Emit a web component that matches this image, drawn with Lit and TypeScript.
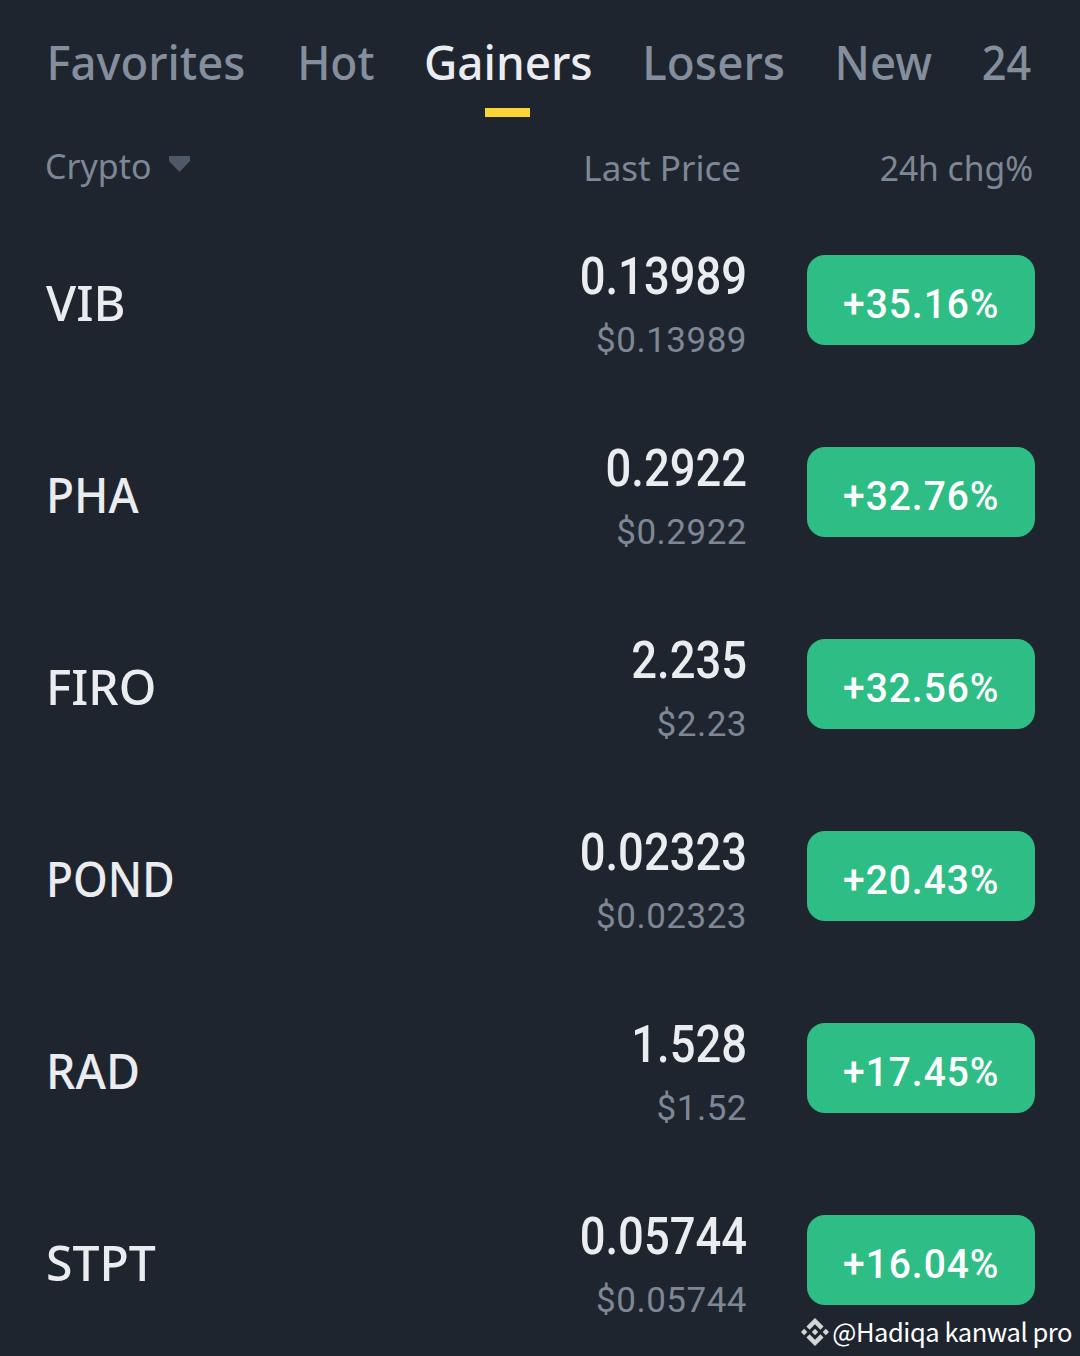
import { LitElement, html, css } from "lit";
import { customElement, property, state } from "lit/decorators.js";
import { styleMap } from "lit/directives/style-map.js";

interface Quote {
  symbol: string;
  stretch: number;
  price: string;
  fiat: string;
  change: string;
}

interface Tab {
  label: string;
  stretch: number;
}

const QUOTES: Quote[] = [
  { symbol: "VIB", stretch: 1, price: "0.13989", fiat: "$0.13989", change: "+35.16%" },
  { symbol: "PHA", stretch: 0.94, price: "0.2922", fiat: "$0.2922", change: "+32.76%" },
  { symbol: "FIRO", stretch: 0.98, price: "2.235", fiat: "$2.23", change: "+32.56%" },
  { symbol: "POND", stretch: 0.905, price: "0.02323", fiat: "$0.02323", change: "+20.43%" },
  { symbol: "RAD", stretch: 0.95, price: "1.528", fiat: "$1.52", change: "+17.45%" },
  { symbol: "STPT", stretch: 0.98, price: "0.05744", fiat: "$0.05744", change: "+16.04%" },
];

const TABS: Tab[] = [
  { label: "Favorites", stretch: 0.947 },
  { label: "Hot", stretch: 0.925 },
  { label: "Gainers", stretch: 0.955 },
  { label: "Losers", stretch: 0.955 },
  { label: "New", stretch: 0.95 },
  { label: "24", stretch: 0.9 },
];

@customElement("quote-row")
class QuoteRow extends LitElement {
  @property({ attribute: false }) quote!: Quote;

  static styles = css`
    :host {
      display: grid;
      grid-template-columns: 1fr 300px 288px;
      align-items: center;
      height: 192px;
      padding: 0 45px 0 46px;
      box-sizing: border-box;
    }
    .symbol {
      font-size: 49px;
      line-height: 60px;
      font-weight: 500;
      color: #eaecf0;
      padding-top: 3px;
      transform-origin: left;
    }
    .prices {
      display: flex;
      flex-direction: column;
      align-items: flex-end;
      font-family: Roboto, sans-serif;
      padding-top: 17px;
    }
    .price {
      font-size: 51px;
      line-height: 64px;
      font-weight: 500;
      color: #eaecf0;
      transform: scaleX(0.89);
      transform-origin: right;
    }
    .fiat {
      font-size: 35px;
      line-height: 64px;
      color: #7e8795;
      letter-spacing: 0.5px;
    }
    .badge {
      justify-self: end;
      display: flex;
      align-items: center;
      justify-content: center;
      width: 228px;
      height: 90px;
      border-radius: 18px;
      background: #2ebd85;
      padding: 8px 0 0 1px;
      box-sizing: border-box;
      font: 500 41px/50px Roboto, sans-serif;
      color: #fff;
    }
    .change {
      letter-spacing: 1px;
      transform: scaleX(0.95);
    }
  `;

  render() {
    const q = this.quote;
    return html`
      <div class="symbol" style=${styleMap({ transform: `scaleX(${q.stretch})` })}>${q.symbol}</div>
      <div class="prices">
        <div class="price">${q.price}</div>
        <div class="fiat">${q.fiat}</div>
      </div>
      <div class="badge"><span class="change">${q.change}</span></div>
    `;
  }
}

@customElement("app-root")
class AppRoot extends LitElement {
  @state() private active = "Gainers";

  static styles = css`
    :host {
      display: block;
      position: relative;
      width: 1080px;
      height: 1356px;
      overflow: hidden;
      background: #1f252f;
      font-family: "Noto Sans", sans-serif;
    }
    .tabs {
      display: grid;
      grid-template-columns: 253px 126px 219px 193px 147px auto;
      justify-content: start;
      justify-items: start;
      height: 120px;
      padding: 28px 0 0 40.5px;
      box-sizing: border-box;
    }
    .tab {
      display: flex;
      flex-direction: column;
      align-items: center;
      gap: 12px;
      font-size: 48px;
      line-height: 68px;
      font-weight: 500;
      color: #848e9c;
    }
    .tab.active {
      color: #eaecf0;
    }
    .tab.active::after {
      content: "";
      width: 45px;
      height: 9px;
      background: #fcd535;
    }
    .head {
      display: grid;
      grid-template-columns: 1fr 300px 288px;
      height: 84px;
      padding: 0 45px 0 45px;
      font-size: 35px;
      line-height: 96px;
      color: #7e8795;
      box-sizing: border-box;
    }
    .market {
      display: flex;
      align-items: center;
      gap: 14px;
      height: 92px;
    }
    .kind {
      transform: scaleX(0.97);
      transform-origin: left;
    }
    .caret {
      width: 21px;
      height: 16px;
      fill: #4f5866;
      margin-bottom: 4px;
    }
    .right {
      text-align: right;
    }
    .right.price {
      padding-right: 6px;
    }
    .right.chg {
      padding-right: 2px;
      transform: scaleX(0.96);
      transform-origin: right;
    }
    .credit {
      position: absolute;
      right: 8px;
      bottom: 4px;
      display: flex;
      align-items: center;
      gap: 3px;
      height: 40px;
      font: 400 25.5px/40px "Noto Sans CJK SC", sans-serif;
      letter-spacing: -0.45px;
      color: #fff;
    }
    .handle {
      padding-bottom: 3px;
    }
    .logo {
      width: 28px;
      height: 28px;
      fill: #d4d5d7;
    }
  `;

  render() {
    return html`
      <nav class="tabs">
        ${TABS.map(
          (t) => html`<div
            class="tab ${t.label === this.active ? "active" : ""}"
            @click=${() => (this.active = t.label)}
          ><span style=${styleMap({ transform: `scaleX(${t.stretch})` })}>${t.label}</span></div>`
        )}
      </nav>
      <div class="head">
        <div class="market">
          <span class="kind">Crypto</span>
          <svg class="caret" viewBox="0 0 21 16"><path d="M0 0H21V5L10.5 16L0 5Z" /></svg>
        </div>
        <div class="right price">Last Price</div>
        <div class="right chg">24h chg%</div>
      </div>
      ${QUOTES.map((q) => html`<quote-row .quote=${q}></quote-row>`)}
      <div class="credit">
        <svg class="logo" viewBox="0 0 24 24">
          <path
            d="M16.624 13.9202l2.7175 2.7154-7.353 7.353-7.353-7.352 2.7175-2.7164 4.6355 4.6595 4.6356-4.6595zm4.6366-4.6366L24 12l-2.7154 2.7164L18.5682 12l2.6924-2.7164zm-9.272.001l2.7163 2.6914-2.7164 2.7174v-.001L9.2721 12l2.7164-2.7154zm-9.2722-.001L5.4088 12l-2.6914 2.6924L0 12l2.7164-2.7164zM11.9885.0115l7.353 7.329-2.7174 2.7154-4.6356-4.6356-4.6355 4.6595-2.7174-2.7154 7.353-7.353z"
          />
        </svg>
        <span class="handle">@Hadiqa kanwal pro</span>
      </div>
    `;
  }
}
